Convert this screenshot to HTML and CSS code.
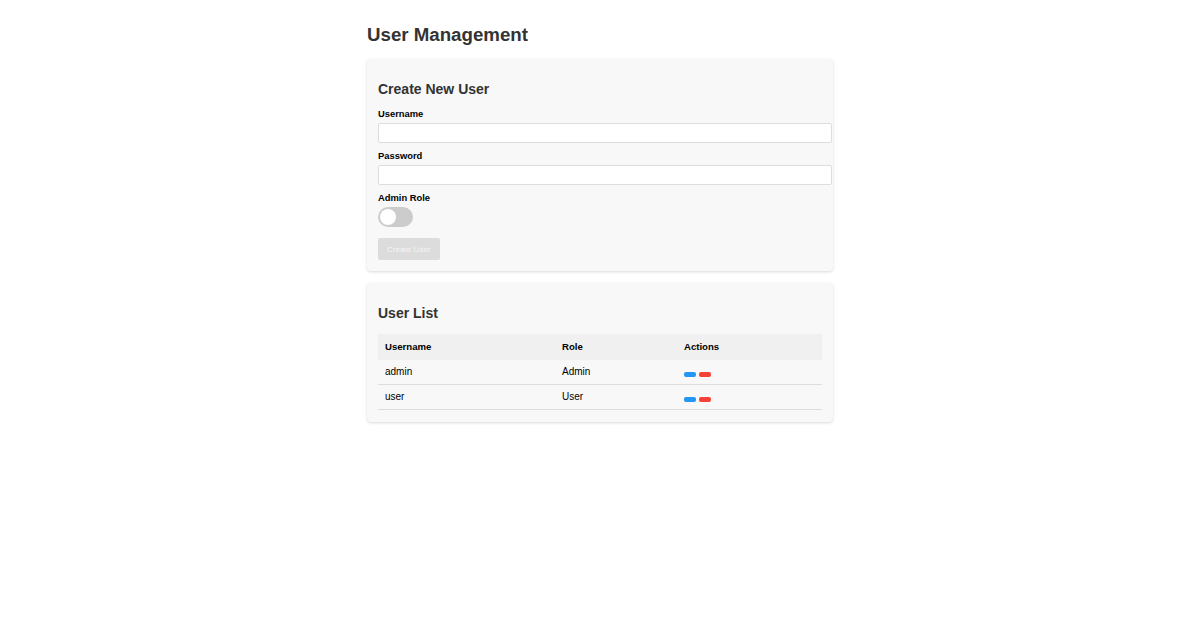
FILE: index.html
```html
<!DOCTYPE html>
<html lang="en">
<head>
  <meta charset="UTF-8" />
  <meta name="viewport" content="width=device-width, initial-scale=1.0" />
  <title>User Management</title>
  <link rel="stylesheet" href="styles.css">
</head>
<body>

  <div class="container">
    <h1>User Management</h1>

    <!-- Create user form -->
    <div class="card">
      <h3>Create New User</h3>
      <label for="username">Username</label>
      <input type="text" id="username" />

      <label for="password">Password</label>
      <input type="password" id="password" />

      <label>Admin Role</label>
      <div class="toggle"><span class="knob"></span></div>

      <button class="btn-create" disabled>Create User</button>
    </div>

    <!-- User list -->
    <div class="card">
      <h3>User List</h3>
      <table>
        <thead>
          <tr>
            <th class="col-name">Username</th>
            <th class="col-role">Role</th>
            <th>Actions</th>
          </tr>
        </thead>
        <tbody>
          <tr>
            <td>admin</td>
            <td>Admin</td>
            <td><button class="btn-edit"></button><button class="btn-delete"></button></td>
          </tr>
          <tr>
            <td>user</td>
            <td>User</td>
            <td><button class="btn-edit"></button><button class="btn-delete"></button></td>
          </tr>
        </tbody>
      </table>
    </div>
  </div>

</body>
</html>
```

FILE: styles.css
```css
body {
  margin: 0;
  font-family: "Liberation Sans", Arial, sans-serif;
  background: #fff;
  color: #000;
}

.container {
  width: 466px;
  margin: 0 auto;
  padding-top: 23px;
}

h1 {
  margin: 0 0 12px;
  font-size: 18.7px;
  line-height: 24px;
  color: #333;
}

.card {
  background: #f8f8f8;
  border-radius: 4px;
  box-shadow: 0 1px 3px rgba(0,0,0,0.15);
  padding: 11px;
  margin-bottom: 12px;
}

.card h3 {
  margin: 11px 0 10px;
  font-size: 14px;
  line-height: 17px;
  color: #333;
}

label {
  display: block;
  font-size: 9.4px;
  line-height: 12px;
  font-weight: bold;
  margin-bottom: 3px;
}

input {
  display: block;
  width: 100%;
  height: 18px;
  padding: 0 4px;
  border: 1px solid #ddd;
  border-radius: 2px;
  background: #fff;
  margin: 0 0 7px;
  font-family: inherit;
  box-sizing: content-box;
}

.toggle {
  width: 35px;
  height: 20px;
  border-radius: 10px;
  background: #ccc;
  position: relative;
}

.toggle .knob {
  position: absolute;
  top: 2px;
  left: 2px;
  width: 16px;
  height: 16px;
  border-radius: 50%;
  background: #fff;
}

.btn-create {
  display: block;
  margin-top: 11px;
  height: 22px;
  padding: 0 9px;
  border: none;
  border-radius: 2px;
  background: #dcdcdc;
  color: #f4f4f4;
  font-family: inherit;
  font-size: 8.1px;
}

.card:last-child h3 {
  margin-bottom: 12px;
}

table {
  width: 100%;
  border-collapse: collapse;
  font-size: 10px;
  margin: 0 0 1px;
}

th {
  background: #f0f0f0;
  text-align: left;
  padding: 7px;
  line-height: 12px;
  font-size: 9.6px;
}

td {
  padding: 6px 7px;
  line-height: 12px;
  border-bottom: 1px solid #ddd;
}

.col-name { width: 163px; }
.col-role { width: 108px; }

.btn-edit,
.btn-delete {
  display: inline-block;
  width: 12px;
  height: 5px;
  padding: 0;
  border: none;
  border-radius: 2px;
  margin-right: 3px;
  vertical-align: -2px;
}

.btn-edit { background: #2196f3; }
.btn-delete { background: #f44336; }
```
